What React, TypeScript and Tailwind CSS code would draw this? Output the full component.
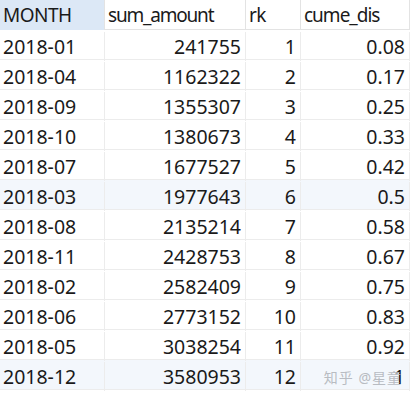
import React from "react";

const rows: [string, string, string, string][] = [
  ["2018-01", "241755", "1", "0.08"],
  ["2018-04", "1162322", "2", "0.17"],
  ["2018-09", "1355307", "3", "0.25"],
  ["2018-10", "1380673", "4", "0.33"],
  ["2018-07", "1677527", "5", "0.42"],
  ["2018-03", "1977643", "6", "0.5"],
  ["2018-08", "2135214", "7", "0.58"],
  ["2018-11", "2428753", "8", "0.67"],
  ["2018-02", "2582409", "9", "0.75"],
  ["2018-06", "2773152", "10", "0.83"],
  ["2018-05", "3038254", "11", "0.92"],
  ["2018-12", "3580953", "12", "1"],
];

export default function App() {
  return (
    <div
      className="w-[418px] h-[398px] bg-white text-[#1a1a1a] overflow-hidden"
      style={{ fontFamily: '"Noto Sans", "Noto Sans CJK SC", sans-serif' }}
    >
      <div className="relative w-[410px]">
        <div className="grid grid-cols-[105px_141px_55px_109px] h-[30px] border-b border-[#e3e3e3] text-[19px] leading-[30px]">
          <div className="bg-[#dce8f6] pl-[3px] border-r border-[#e3e3e3] tracking-[-0.5px]">MONTH</div>
          <div className="pl-[3px] border-r border-[#e3e3e3] tracking-[-1.2px]">sum_amount</div>
          <div className="pl-[3px] border-r border-[#e3e3e3] tracking-[-0.5px]">rk</div>
          <div className="pl-[3px] border-r border-[#e3e3e3] tracking-[-1px]">cume_dis</div>
        </div>
        {rows.map((r, i) => (
          <div
            key={i}
            className={
              "grid grid-cols-[105px_141px_55px_109px] h-[30px] border-b border-[#ececec] text-[19.5px] leading-[29px] pt-[2px] " +
              (i === 5 || i === 11 ? "bg-[#f3f7fc]" : "bg-white")
            }
          >
            <div className="pl-[3px] border-r border-[#ececec]">{r[0]}</div>
            <div className="pr-[4px] text-right border-r border-[#ececec]">{r[1]}</div>
            <div className="pr-[4px] text-right border-r border-[#ececec]">{r[2]}</div>
            <div className="pr-[4px] text-right border-r border-[#ececec]">{r[3]}</div>
          </div>
        ))}
        <div className="absolute right-[8px] top-[367px] text-[14px] text-[#b8bcc2] tracking-[1px]">
          知乎 @星童
        </div>
      </div>
    </div>
  );
}
